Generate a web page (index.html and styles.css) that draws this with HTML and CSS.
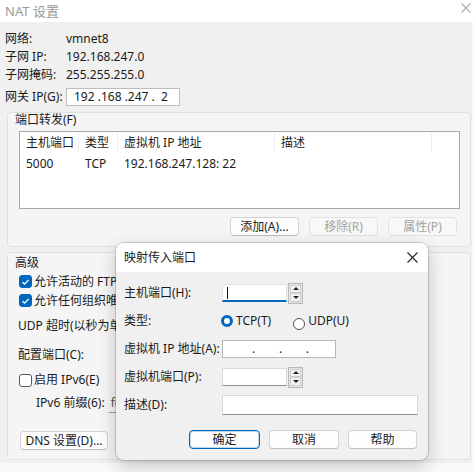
FILE: index.html
```html
<!DOCTYPE html>
<html lang="zh-CN">
<head>
<meta charset="utf-8">
<title>NAT 设置</title>
<link rel="stylesheet" href="styles.css">
</head>
<body>
<div class="win">
  <div class="titlebar">
    <span class="title">NAT 设置</span>
    <svg class="xicon main-x" width="10" height="10" viewBox="0 0 10 10"><path d="M0.5 0.5L9.5 9.5M9.5 0.5L0.5 9.5" stroke="#a8a8a8" stroke-width="1.1"/></svg>
  </div>
  <div class="body">
    <div class="info">
      <div class="row"><span class="lbl">网络:</span><span>vmnet8</span></div>
      <div class="row"><span class="lbl">子网 IP:</span><span>192.168.247.0</span></div>
      <div class="row"><span class="lbl">子网掩码:</span><span>255.255.255.0</span></div>
      <div class="row gw"><span class="lbl">网关 IP(G):</span><div class="ipbox">192 .168 .247 .  2</div></div>
    </div>

    <section class="group pf">
      <div class="glabel">端口转发(F)</div>
      <div class="list">
        <div class="lrow lhead">
          <span class="c1">主机端口</span><span class="c2">类型</span><span class="c3">虚拟机 IP 地址</span><span class="c4">描述</span><span class="c5"></span>
        </div>
        <div class="lrow ldata">
          <span class="c1">5000</span><span class="c2">TCP</span><span class="c3">192.168.247.128: 22</span><span class="c4"></span><span class="c5"></span>
        </div>
      </div>
      <div class="btns">
        <button class="btn">添加(A)...</button>
        <button class="btn dis">移除(R)</button>
        <button class="btn dis">属性(P)</button>
      </div>
    </section>

    <section class="group adv">
      <div class="glabel">高级</div>
      <div class="chk first"><span class="box on"><svg width="12" height="12" viewBox="0 0 12 12"><path d="M2.8 6.2L5 8.4L9.3 3.8" fill="none" stroke="#fff" stroke-width="1.4"/></svg></span>允许活动的 FTP(T)</div>
      <div class="chk"><span class="box on"><svg width="12" height="12" viewBox="0 0 12 12"><path d="M2.8 6.2L5 8.4L9.3 3.8" fill="none" stroke="#fff" stroke-width="1.4"/></svg></span>允许任何组织唯一标识符(O)</div>
      <div class="line udp">UDP 超时(以秒为单位)(U):</div>
      <div class="line cfg">配置端口(C):</div>
      <div class="chk v6"><span class="box"></span>启用 IPv6(E)</div>
      <div class="line prefix"><span>IPv6 前缀(6):</span><span class="pinput">fd15:4ba5:5a2b:1008::/64</span></div>
      <button class="btn dns">DNS 设置(D)...</button>
    </section>
  </div>

  <div class="dlg">
    <div class="dtitle">
      <span>映射传入端口</span>
      <svg class="xicon" width="11" height="11" viewBox="0 0 11 11"><path d="M0.5 0.5L10.5 10.5M10.5 0.5L0.5 10.5" stroke="#222" stroke-width="1.1"/></svg>
    </div>
    <div class="dform">
      <span>主机端口(H):</span>
      <div class="ctl">
        <div class="inp port focus"><span class="caret"></span></div>
        <div class="spin"><span class="sb"><i class="up"></i></span><span class="sb"><i class="dn"></i></span></div>
      </div>

      <span>类型:</span>
      <div class="ctl radios">
        <span class="radio on"></span><span class="rtext">TCP(T)</span>
        <span class="radio udp"></span><span class="rtext">UDP(U)</span>
      </div>

      <span>虚拟机 IP 地址(A):</span>
      <div class="ctl">
        <div class="inp ip"><span>.</span><span>.</span><span>.</span></div>
      </div>

      <span>虚拟机端口(P):</span>
      <div class="ctl">
        <div class="inp port"></div>
        <div class="spin"><span class="sb"><i class="up"></i></span><span class="sb"><i class="dn"></i></span></div>
      </div>

      <span>描述(D):</span>
      <div class="ctl">
        <div class="inp desc"></div>
      </div>
    </div>
    <div class="dbtns">
      <button class="btn def">确定</button>
      <button class="btn w70">取消</button>
      <button class="btn w69">帮助</button>
    </div>
  </div>
</div>
</body>
</html>
```
FILE: styles.css
```css
* { box-sizing: border-box; }

body {
  margin: 0;
  font-family: "Noto Sans", "Noto Sans CJK SC", sans-serif;
  font-size: 12px;
  line-height: 14px;
  color: #1b1b1b;
  background: #fff;
}

.win {
  position: relative;
  width: 474px;
  height: 472px;
  overflow: hidden;
  background: #fafafa;
}

.titlebar {
  height: 22px;
  display: flex;
  align-items: center;
  justify-content: space-between;
  padding: 0 3px 0 5px;
  background: #fff;
}
.title {
  font-size: 13px;
  color: #9a9a9a;
}
.main-x { margin-top: -6px; }

.body {
  width: 472px;
  height: 441px;
  background: #f0f0f0;
  padding-top: 8px;
}

.info { padding-left: 5px; }
.row {
  display: flex;
  align-items: center;
  height: 18px;
}
.lbl { width: 61px; }
.row.gw { height: 20px; margin-top: 3px; }
.ipbox {
  width: 114px;
  height: 18px;
  border: 1px solid #bdbdbd;
  background: #fff;
  padding-left: 7px;
  line-height: 16px;
  white-space: pre;
}

.group {
  margin: 5px 0 0 7px;
  width: 464px;
  border: 1px solid #e1e1e1;
  border-radius: 4px;
  background: #f5f5f5;
}
.glabel {
  margin-left: 7px;
  height: 14px;
  line-height: 14px;
}

.pf { height: 135px; }
.list {
  margin: 4px 0 0 11px;
  width: 441px;
  height: 78px;
  border: 1px solid #a9a9a9;
  background: #fff;
}
.lrow {
  display: grid;
  grid-template-columns: 59px 39px 157px 157px 1fr;
}
.lhead { height: 21px; align-items: center; }
.lhead span {
  height: 19px;
  line-height: 19px;
  border-right: 1px solid #ececec;
}
.lhead .c5 { border-right: none; }
.lrow span { padding-left: 6px; white-space: nowrap; }
.ldata { margin-top: 4px; height: 14px; }

.btns {
  display: flex;
  justify-content: flex-end;
  gap: 10px;
  margin-top: 8px;
  padding-right: 13px;
}

.btn {
  font-family: inherit;
  font-size: 12px;
  line-height: 14px;
  color: #1b1b1b;
  height: 19px;
  width: 69px;
  padding: 0;
  background: #fdfdfd;
  border: 1px solid #d3d3d3;
  border-bottom-color: #bdbdbd;
  border-radius: 4px;
}
.btn.dis { color: #a3a3a3; background: #f8f8f8; border-color: #e2e2e2; }

.adv { height: 208px; padding-top: 3px; }
.chk {
  display: flex;
  align-items: center;
  height: 19px;
  margin-left: 11px;
  white-space: nowrap;
}
.chk.first { margin-top: 2px; }
.box {
  width: 13px;
  height: 13px;
  margin-right: 2px;
  border: 1px solid #5a5a5a;
  border-radius: 3px;
  background: #fff;
  display: flex;
  align-items: center;
  justify-content: center;
}
.box.on { background: #0067c0; border-color: #0067c0; }

.line {
  display: flex;
  align-items: center;
  height: 20px;
  margin-left: 10px;
  white-space: nowrap;
}
.udp { margin-top: 6px; }
.cfg { margin-top: 9px; }
.chk.v6 { margin-top: 5px; height: 20px; }
.prefix { margin-top: 3px; margin-left: 28px; }
.pinput {
  margin-left: 4px;
  height: 20px;
  width: 200px;
  line-height: 19px;
  padding-left: 2px;
  color: #555;
  border-bottom: 1px solid #9a9a9a;
}
.btn.dns {
  display: block;
  margin: 18px 0 0 12px;
  width: 88px;
}

/* overlay dialog */
.dlg {
  position: absolute;
  left: 116px;
  top: 243px;
  width: 312px;
  height: 217px;
  background: #f0f0f0;
  border-radius: 8px;
  overflow: hidden;
  box-shadow: 0 0 0 1px rgba(0,0,0,0.16), 0 6px 18px rgba(0,0,0,0.22);
}
.dtitle {
  height: 29px;
  background: #fff;
  display: flex;
  align-items: center;
  justify-content: space-between;
  padding: 0 10px 0 8px;
}
.dform {
  display: grid;
  grid-template-columns: 98px auto;
  grid-auto-rows: 28px;
  align-items: center;
  padding: 7px 0 0 8px;
}
.ctl {
  display: flex;
  align-items: center;
}
.inp {
  height: 18px;
  background: #fff;
  border: 1px solid #d8d8d8;
  border-bottom-color: #8e8e8e;
}
.inp.port { width: 65px; }
.inp.focus {
  border-color: #e2e2e2;
  border-bottom: 2px solid #0067c0;
  display: flex;
  align-items: center;
}
.caret {
  width: 1px;
  height: 12px;
  background: #111;
  margin-left: 4px;
}
.inp.ip {
  width: 114px;
  border-color: #b8b8b8;
  display: flex;
  justify-content: space-between;
  padding: 0 26px 0 29px;
  line-height: 15px;
}
.inp.desc { width: 196px; height: 20px; }

.spin {
  margin-left: 1px;
  width: 15px;
  height: 21px;
  border: 1px solid #b9b9b9;
  background: #e4e4e4;
  display: flex;
  flex-direction: column;
  justify-content: space-between;
  padding: 1px;
}
.sb {
  height: 9px;
  background: #f2f2f2;
  border: 1px solid #cfcfcf;
  display: flex;
  align-items: center;
  justify-content: center;
}
.sb i { width: 0; height: 0; border-left: 3px solid transparent; border-right: 3px solid transparent; }
.sb i.up { border-bottom: 3px solid #222; }
.sb i.dn { border-top: 3px solid #222; }

.radios { gap: 0; }
.radio {
  width: 12px;
  height: 12px;
  border-radius: 50%;
  border: 1px solid #555;
  background: #fff;
  margin-right: 3px;
}
.radio.on { border: 3.5px solid #0067c0; margin-left: -1px; }
.radio.udp { margin-left: 22px; }

.dbtns {
  display: flex;
  justify-content: flex-end;
  gap: 9px;
  margin-top: 11px;
  padding-right: 11px;
}
.btn.def {
  width: 71px;
  border: 1px solid #0067c0;
  box-shadow: inset 0 0 0 1px rgba(0,103,192,0.25);
}
.btn.w70 { width: 70px; }
.btn.w69 { width: 69px; }
```
